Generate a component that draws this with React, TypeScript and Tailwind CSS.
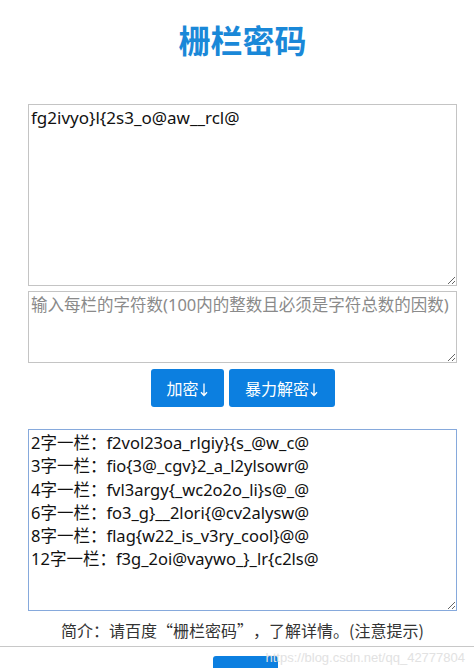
const FONT = "font-['Noto_Sans','Noto_Sans_CJK_SC',sans-serif]";
const CJK = "font-['Noto_Sans_CJK_SC',sans-serif]";

const RESULT = `2字一栏：f2vol23oa_rlgiy}{s_@w_c@
3字一栏：fio{3@_cgv}2_a_l2ylsowr@
4字一栏：fvl3argy{_wc2o2o_li}s@_@
6字一栏：fo3_g}__2lori{@cv2alysw@
8字一栏：flag{w22_is_v3ry_cool}@@
12字一栏：f3g_2oi@vaywo_}_lr{c2ls@`;

function DownArrow() {
  return (
    <svg width="8" height="15" viewBox="0 0 8 15" className="inline-block ml-[1px] -mt-[2px] align-middle">
      <path d="M4 1.5v12M1 10.2l3 3.3 3-3.3" fill="none" stroke="white" strokeWidth="1.3" />
    </svg>
  );
}

export default function App() {
  return (
    <div className={`relative min-h-[668px] bg-white text-[#222] [text-spacing-trim:space-all] ${FONT}`}>
      <div className="ml-[28px] w-[429px] flex flex-col">
        {/* Title */}
        <h1 className={`pt-[17px] h-[104px] text-center text-[32px] leading-[44px] font-bold text-[#1a88d8] ${CJK}`}>
          栅栏密码
        </h1>

        {/* Plain text */}
        <textarea
          defaultValue="fg2ivyo}l{2s3_o@aw__rcl@"
          spellCheck={false}
          className="block w-full h-[182px] border border-[#c4c4c4] px-[2px] py-[1px] text-[17px] leading-[23px] text-[#111] outline-none"
        />

        {/* Column count */}
        <textarea
          placeholder="输入每栏的字符数(100内的整数且必须是字符总数的因数)"
          className="block w-full h-[72px] mt-[5px] border border-[#c4c4c4] px-[2px] py-[1px] text-[16.5px] leading-[23px] outline-none placeholder:text-[#8a8a8a]"
        />

        {/* Actions */}
        <div className={`flex justify-center gap-[5px] mt-[6px] ${CJK}`}>
          <button className="h-[38px] w-[73px] rounded-[3px] bg-[#0c7fe0] text-white text-[16px]">
            加密<DownArrow />
          </button>
          <button className="h-[38px] w-[106px] rounded-[3px] bg-[#0c7fe0] text-white text-[16px]">
            暴力解密<DownArrow />
          </button>
        </div>

        {/* Output */}
        <textarea
          defaultValue={RESULT}
          spellCheck={false}
          className="block w-full h-[182px] mt-[22px] border border-[#86a9dc] px-[2px] py-[1px] text-[16.5px] leading-[23.3px] text-[#111] outline-none"
        />

        <p className={`mt-[8px] text-center text-[16px] leading-[22px] text-[#333] ${CJK}`}>
          简介：请百度“栅栏密码”，了解详情。(注意提示)
        </p>
      </div>

      <div className="mt-[5px] h-px w-full bg-[#c8c8c8]" />

      <div className="ml-[213px] mt-[9px] h-[24px] w-[65px] rounded-t-[3px] bg-[#0c7fe0]" />

      <span className="absolute right-[9px] top-[648px] text-[13px] text-[#e2e2e2] font-['Liberation_Sans',sans-serif]">
        https://blog.csdn.net/qq_42777804
      </span>
    </div>
  );
}
